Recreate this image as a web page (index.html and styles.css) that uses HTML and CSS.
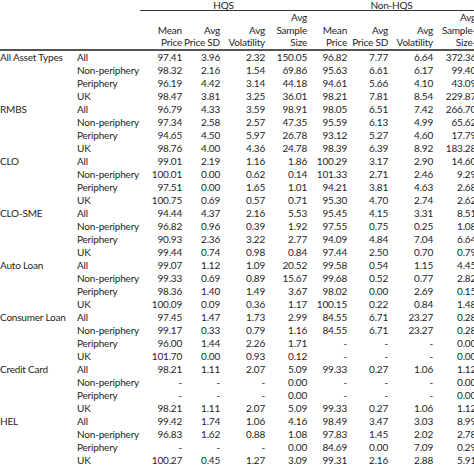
FILE: index.html
```html
<!DOCTYPE html>
<html>
<head>
<meta charset="utf-8">
<link rel="stylesheet" href="styles.css">
</head>
<body>
<table class="tbl">
<colgroup>
<col class="c-type"><col class="c-reg">
<col class="c3"><col class="c4"><col class="c5"><col class="c6">
<col class="c7"><col class="c8"><col class="c9"><col class="c10">
</colgroup>
<thead>
<tr class="grp">
<th></th><th></th>
<th colspan="4" class="g">HQS</th>
<th colspan="4" class="g">Non-HQS</th>
</tr>
<tr class="hdr">
<th></th><th></th>
<th>Mean<br>Price</th><th>Avg<br>Price SD</th><th>Avg<br>Volatility</th><th>Avg<br>Sample<br>Size</th>
<th>Mean<br>Price</th><th>Avg<br>Price SD</th><th>Avg<br>Volatility</th><th>Avg<br>Sample-<br>Size-</th>
</tr>
</thead>
<tbody>
<tr><td>All Asset Types</td><td>All</td><td>97.41</td><td>3.96</td><td>2.32</td><td>150.05</td><td>96.82</td><td>7.77</td><td>6.64</td><td>372.36</td></tr>
<tr><td></td><td>Non-periphery</td><td>98.32</td><td>2.16</td><td>1.54</td><td>69.86</td><td>95.63</td><td>6.61</td><td>6.17</td><td>99.40</td></tr>
<tr><td></td><td>Periphery</td><td>96.19</td><td>4.42</td><td>3.14</td><td>44.18</td><td>94.61</td><td>5.66</td><td>4.10</td><td>43.09</td></tr>
<tr><td></td><td>UK</td><td>98.47</td><td>3.81</td><td>3.25</td><td>36.01</td><td>98.21</td><td>7.81</td><td>8.54</td><td>229.87</td></tr>
<tr><td>RMBS</td><td>All</td><td>96.79</td><td>4.33</td><td>3.59</td><td>98.91</td><td>98.05</td><td>6.51</td><td>7.42</td><td>266.70</td></tr>
<tr><td></td><td>Non-periphery</td><td>97.34</td><td>2.58</td><td>2.57</td><td>47.35</td><td>95.59</td><td>6.13</td><td>4.99</td><td>65.62</td></tr>
<tr><td></td><td>Periphery</td><td>94.65</td><td>4.50</td><td>5.97</td><td>26.78</td><td>93.12</td><td>5.27</td><td>4.60</td><td>17.79</td></tr>
<tr><td></td><td>UK</td><td>98.76</td><td>4.00</td><td>4.36</td><td>24.78</td><td>98.39</td><td>6.39</td><td>8.92</td><td>183.28</td></tr>
<tr><td>CLO</td><td>All</td><td>99.01</td><td>2.19</td><td>1.16</td><td>1.86</td><td>100.29</td><td>3.17</td><td>2.90</td><td>14.60</td></tr>
<tr><td></td><td>Non-periphery</td><td>100.01</td><td>0.00</td><td>0.62</td><td>0.14</td><td>101.33</td><td>2.71</td><td>2.46</td><td>9.29</td></tr>
<tr><td></td><td>Periphery</td><td>97.51</td><td>0.00</td><td>1.65</td><td>1.01</td><td>94.21</td><td>3.81</td><td>4.63</td><td>2.68</td></tr>
<tr><td></td><td>UK</td><td>100.75</td><td>0.69</td><td>0.57</td><td>0.71</td><td>95.30</td><td>4.70</td><td>2.74</td><td>2.62</td></tr>
<tr><td>CLO-SME</td><td>All</td><td>94.44</td><td>4.37</td><td>2.16</td><td>5.53</td><td>95.45</td><td>4.15</td><td>3.31</td><td>8.51</td></tr>
<tr><td></td><td>Non-periphery</td><td>96.82</td><td>0.96</td><td>0.39</td><td>1.92</td><td>97.55</td><td>0.75</td><td>0.25</td><td>1.08</td></tr>
<tr><td></td><td>Periphery</td><td>90.93</td><td>2.36</td><td>3.22</td><td>2.77</td><td>94.09</td><td>4.84</td><td>7.04</td><td>6.64</td></tr>
<tr><td></td><td>UK</td><td>99.44</td><td>0.74</td><td>0.98</td><td>0.84</td><td>97.44</td><td>2.50</td><td>0.70</td><td>0.79</td></tr>
<tr><td>Auto Loan</td><td>All</td><td>99.07</td><td>1.12</td><td>1.09</td><td>20.52</td><td>99.58</td><td>0.54</td><td>1.15</td><td>4.45</td></tr>
<tr><td></td><td>Non-periphery</td><td>99.33</td><td>0.69</td><td>0.89</td><td>15.67</td><td>99.68</td><td>0.52</td><td>0.77</td><td>2.82</td></tr>
<tr><td></td><td>Periphery</td><td>98.36</td><td>1.40</td><td>1.49</td><td>3.67</td><td>98.02</td><td>0.00</td><td>2.69</td><td>0.15</td></tr>
<tr><td></td><td>UK</td><td>100.09</td><td>0.09</td><td>0.36</td><td>1.17</td><td>100.15</td><td>0.22</td><td>0.84</td><td>1.48</td></tr>
<tr><td>Consumer Loan</td><td>All</td><td>97.45</td><td>1.47</td><td>1.73</td><td>2.99</td><td>84.55</td><td>6.71</td><td>23.27</td><td>0.28</td></tr>
<tr><td></td><td>Non-periphery</td><td>99.17</td><td>0.33</td><td>0.79</td><td>1.16</td><td>84.55</td><td>6.71</td><td>23.27</td><td>0.28</td></tr>
<tr><td></td><td>Periphery</td><td>96.00</td><td>1.44</td><td>2.26</td><td>1.71</td><td>-</td><td>-</td><td>-</td><td>0.00</td></tr>
<tr><td></td><td>UK</td><td>101.70</td><td>0.00</td><td>0.93</td><td>0.12</td><td>-</td><td>-</td><td>-</td><td>0.00</td></tr>
<tr><td>Credit Card</td><td>All</td><td>98.21</td><td>1.11</td><td>2.07</td><td>5.09</td><td>99.33</td><td>0.27</td><td>1.06</td><td>1.12</td></tr>
<tr><td></td><td>Non-periphery</td><td>-</td><td>-</td><td>-</td><td>0.00</td><td>-</td><td>-</td><td>-</td><td>0.00</td></tr>
<tr><td></td><td>Periphery</td><td>-</td><td>-</td><td>-</td><td>0.00</td><td>-</td><td>-</td><td>-</td><td>0.00</td></tr>
<tr><td></td><td>UK</td><td>98.21</td><td>1.11</td><td>2.07</td><td>5.09</td><td>99.33</td><td>0.27</td><td>1.06</td><td>1.12</td></tr>
<tr><td>HEL</td><td>All</td><td>99.42</td><td>1.74</td><td>1.06</td><td>4.16</td><td>98.49</td><td>3.47</td><td>3.03</td><td>8.99</td></tr>
<tr><td></td><td>Non-periphery</td><td>96.83</td><td>1.62</td><td>0.88</td><td>1.08</td><td>97.83</td><td>1.45</td><td>2.02</td><td>2.78</td></tr>
<tr><td></td><td>Periphery</td><td>-</td><td>-</td><td>-</td><td>0.00</td><td>84.69</td><td>0.00</td><td>7.09</td><td>0.29</td></tr>
<tr><td></td><td>UK</td><td>100.27</td><td>0.45</td><td>1.27</td><td>3.09</td><td>99.31</td><td>2.16</td><td>2.88</td><td>5.91</td></tr>
</tbody>
</table>
</body>
</html>
```

FILE: styles.css
```css
html, body {
  margin: 0;
  padding: 0;
  background: #ffffff;
  overflow: hidden;
}

.tbl {
  border-collapse: collapse;
  table-layout: fixed;
  width: 476px;
  font-family: Lato, "Open Sans", sans-serif;
  font-size: 10px;
  color: #1e1e1e;
  letter-spacing: -0.2px;
}

.c-type { width: 77px; }
.c-reg { width: 63px; }
.c3 { width: 42px; }
.c4 { width: 38px; }
.c5 { width: 45px; }
.c6 { width: 42px; }
.c7 { width: 40px; }
.c8 { width: 41px; }
.c9 { width: 45px; }
.c10 { width: 43px; }

.tbl th, .tbl td {
  padding: 0;
  white-space: nowrap;
  font-weight: normal;
}

.grp th {
  height: 10px;
  line-height: 10px;
  text-align: center;
}

.grp .g {
  border-bottom: 1px solid #333;
}

.hdr th {
  height: 37px;
  line-height: 12.5px;
  text-align: right;
  vertical-align: bottom;
  border-bottom: 2px solid #555;
  padding-bottom: 0;
}

.hdr th:first-child, .hdr th:nth-child(2) {
  border-bottom: 2px solid #555;
}

.tbl td {
  height: 13px;
  line-height: 13px;
  text-align: right;
}

.tbl td:first-child, .tbl td:nth-child(2) {
  text-align: left;
}
```
